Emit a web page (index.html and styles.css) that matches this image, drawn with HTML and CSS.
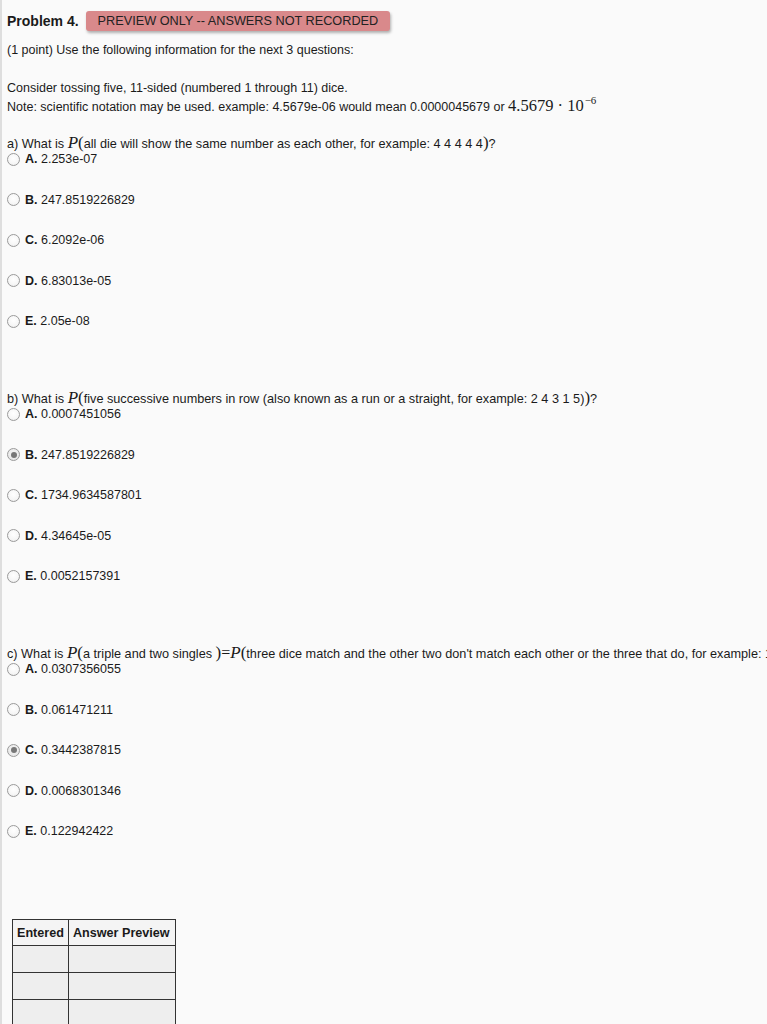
FILE: index.html
```html
<!DOCTYPE html>
<html>
<head>
<meta charset="utf-8">
<link rel="stylesheet" href="styles.css">
</head>
<body>
<div class="page">
  <div class="header">
    <span class="title">Problem 4.</span>
    <span class="badge">PREVIEW ONLY -- ANSWERS NOT RECORDED</span>
  </div>
  <div class="intro">(1 point) Use the following information for the next 3 questions:</div>
  <div class="setup">
    <div class="line">Consider tossing five, 11-sided (numbered 1 through 11) dice.</div>
    <div class="line">Note: scientific notation may be used. example: 4.5679e-06 would mean 0.0000045679 or <span class="mnum">4.5679 · 10<sup class="msup">−6</sup></span></div>
  </div>

  <div class="question qa">
    <div class="qline">a) What is <span class="mi">P</span><span class="mp">(</span>all die will show the same number as each other, for example: 4 4 4 4 4<span class="mp">)</span>?</div>
    <div class="opt"><span class="radio"></span><b>A.</b>&nbsp;2.253e-07</div>
    <div class="opt"><span class="radio"></span><b>B.</b>&nbsp;247.8519226829</div>
    <div class="opt"><span class="radio"></span><b>C.</b>&nbsp;6.2092e-06</div>
    <div class="opt"><span class="radio"></span><b>D.</b>&nbsp;6.83013e-05</div>
    <div class="opt"><span class="radio"></span><b>E.</b>&nbsp;2.05e-08</div>
  </div>

  <div class="question qb">
    <div class="qline">b) What is <span class="mi">P</span><span class="mp">(</span>five successive numbers in row (also known as a run or a straight, for example: 2 4 3 1 5)<span class="mp">)</span>?</div>
    <div class="opt"><span class="radio"></span><b>A.</b>&nbsp;0.0007451056</div>
    <div class="opt"><span class="radio checked"></span><b>B.</b>&nbsp;247.8519226829</div>
    <div class="opt"><span class="radio"></span><b>C.</b>&nbsp;1734.9634587801</div>
    <div class="opt"><span class="radio"></span><b>D.</b>&nbsp;4.34645e-05</div>
    <div class="opt"><span class="radio"></span><b>E.</b>&nbsp;0.0052157391</div>
  </div>

  <div class="question qc">
    <div class="qline">c) What is <span class="mi">P</span><span class="mp">(</span>a triple and two singles <span class="mp">)</span><span class="meq">=</span><span class="mi">P</span><span class="mp">(</span>three dice match and the other two don't match each other or the three that do, for example: 1 1 1 2 3<span class="mp">)</span>?</div>
    <div class="opt"><span class="radio"></span><b>A.</b>&nbsp;0.0307356055</div>
    <div class="opt"><span class="radio"></span><b>B.</b>&nbsp;0.061471211</div>
    <div class="opt"><span class="radio checked"></span><b>C.</b>&nbsp;0.3442387815</div>
    <div class="opt"><span class="radio"></span><b>D.</b>&nbsp;0.0068301346</div>
    <div class="opt"><span class="radio"></span><b>E.</b>&nbsp;0.122942422</div>
  </div>

  <table class="results">
    <tr><th class="c1">Entered</th><th class="c2">Answer Preview</th></tr>
    <tr><td></td><td></td></tr>
    <tr><td></td><td></td></tr>
    <tr><td></td><td></td></tr>
  </table>
</div>
</body>
</html>
```

FILE: styles.css
```css
html {
  overflow: hidden;
}
body {
  margin: 0;
  background: #fafafa;
  font-family: "Liberation Sans", Arial, sans-serif;
  font-size: 12.5px;
  color: #1a1a1a;
}
.page {
  border-left: 2px solid #dedede;
  padding-left: 5px;
  min-height: 1024px;
  box-sizing: border-box;
  padding-top: 11px;
  overflow: hidden;
}
.header {
  display: flex;
  align-items: center;
  height: 20px;
}
.title {
  font-weight: bold;
  font-size: 14px;
  margin-right: 7px;
}
.badge {
  background: #d9898b;
  height: 20px;
  line-height: 20px;
  padding: 0 12px;
  border-radius: 3px;
  box-shadow: 1px 2px 3px rgba(0,0,0,0.3);
  font-size: 12.7px;
  color: #222;
}
.intro {
  margin-top: 11px;
  line-height: 16px;
}
.setup {
  margin-top: 21px;
}
.line {
  line-height: 18px;
  height: 18px;
  white-space: nowrap;
}
.mnum {
  font-family: "Liberation Serif", "Times New Roman", serif;
  font-size: 16.5px;
}
.msup {
  font-size: 11px;
  vertical-align: 7px;
  line-height: 0;
  margin-left: 1px;
}
.question .qline {
  line-height: 16px;
  height: 16px;
  white-space: nowrap;
  font-size: 12.7px;
}
.qa { margin-top: 20px; }
.qb { margin-top: 61px; }
.qc { margin-top: 61px; }
.mi {
  font-family: "Liberation Serif", "Times New Roman", serif;
  font-style: italic;
  font-size: 17px;
}
.mp {
  font-family: "Liberation Serif", "Times New Roman", serif;
  font-size: 17px;
}
.meq {
  font-family: "Liberation Serif", "Times New Roman", serif;
  font-size: 16px;
}
.opt {
  display: flex;
  align-items: center;
  height: 16px;
  line-height: 16px;
  margin-bottom: 24.5px;
  white-space: nowrap;
}
.opt:last-child {
  margin-bottom: 0;
}
.radio {
  width: 11px;
  height: 11px;
  border: 1px solid #9a9a9a;
  border-radius: 50%;
  background: radial-gradient(circle at 50% 40%, #ffffff 0%, #f6f6f6 60%, #e2e2e2 100%);
  margin-right: 5px;
  position: relative;
  flex: none;
}
.radio.checked {
  background: radial-gradient(circle at 50% 40%, #f4f4f4 0%, #e4e4e4 100%);
}
.radio.checked::after {
  content: "";
  position: absolute;
  left: 2.5px;
  top: 2.5px;
  width: 6px;
  height: 6px;
  border-radius: 50%;
  background: #777;
}
.results {
  margin-top: 80px;
  margin-left: 5px;
  border-collapse: collapse;
}
.results th, .results td {
  border: 1px solid #333;
  background: #eeeeee;
  padding: 0 4px;
}
.results th {
  height: 25px;
  font-weight: bold;
  font-size: 12.6px;
  text-align: left;
  background: #f4f4f4;
}
.results td {
  height: 26px;
}
.results .c1 { width: 47px; }
.results .c2 { width: 98px; }
```
